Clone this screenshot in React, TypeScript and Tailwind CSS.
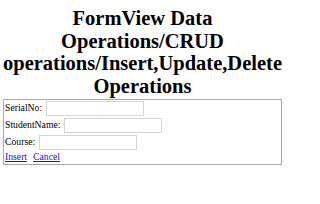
export default function App() {
  const serif = { fontFamily: '"Liberation Serif", "Times New Roman", serif' };
  return (
    <div className="w-[320px] h-[204px] bg-white text-black overflow-hidden" style={serif}>
      <div className="pt-[7px] pl-[3px] w-[282px]">
        <h1 className="flex flex-col items-center whitespace-nowrap text-[20.5px] leading-[22.5px] font-bold">
          <span>FormView Data</span>
          <span>Operations/CRUD</span>
          <span>operations/Insert,Update,Delete</span>
          <span>Operations</span>
        </h1>
        <div className="mt-[2px] border border-[#a8a8a8] pl-[1px] text-[9.7px]">
          <div className="flex items-center gap-[3.5px] h-[17px]">
            <span>SerialNo:</span>
            <input className="w-[98px] h-[15px] border border-[#d6d6d6] outline-none" />
          </div>
          <div className="flex items-center gap-[3.5px] h-[17px]">
            <span>StudentName:</span>
            <input className="w-[98px] h-[15px] border border-[#d6d6d6] outline-none" />
          </div>
          <div className="flex items-center gap-[3.5px] h-[17px]">
            <span>Course:</span>
            <input className="w-[98px] h-[15px] border border-[#d6d6d6] outline-none" />
          </div>
          <div className="flex items-center gap-[6px] h-[13px]">
            <a href="#" className="text-[#1a0dff] underline">Insert</a>
            <a href="#" className="text-[#1a0dff] underline">Cancel</a>
          </div>
        </div>
      </div>
    </div>
  );
}
